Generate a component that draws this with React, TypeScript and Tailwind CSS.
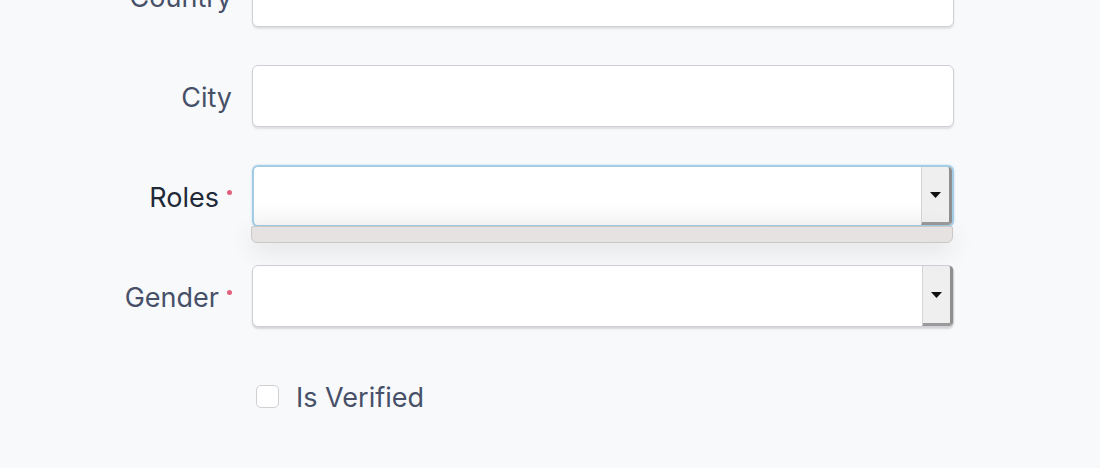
import React from "react";

const SelectArrow = () => (
    <div className="absolute right-0 top-0 bottom-0 w-[31px] flex items-center justify-center bg-[#efefef] border-l border-l-[#d4d4d4] border-r-[3px] border-r-[#8f8f8f] border-b-[3px] border-b-[#9a9a9a] rounded-r-[4px]">
        <svg width="11" height="6" viewBox="0 0 11 6">
            <path d="M0 0 L11 0 L5.5 6 Z" fill="#111" />
        </svg>
    </div>
);

const Label = ({ text, required, active }: { text: string; required?: boolean; active?: boolean }) => (
    <div className="flex justify-end items-center pr-5 pt-[3px]">
        <span className={`text-[27px] leading-none ${active ? "text-[#1f2937]" : "text-[#475068]"}`}>{text}</span>
        {required && <span className="ml-[8px] mb-[11px] w-[5px] h-[5px] rounded-full bg-[#e0607e]" />}
    </div>
);

const App = () => {
    return (
        <div
            className="w-[1100px] h-[468px] overflow-hidden bg-[#f8f9fb]"
            style={{ fontFamily: "Inter, 'Noto Sans', sans-serif" }}
        >
            <div className="-mt-[35px] grid grid-cols-[252px_702px] gap-y-[38px] items-center">
                <Label text="Country" />
                <div className="h-[62px] rounded-[6px] bg-white border border-[#cfd0d5] shadow-[0_2px_2px_rgba(0,0,0,0.1)]" />

                <Label text="City" />
                <div className="h-[62px] rounded-[6px] bg-white border border-[#cfd0d5] shadow-[0_2px_2px_rgba(0,0,0,0.1)]" />

                <Label text="Roles" required active />
                <div className="relative h-[62px]">
                    <div className="relative h-[62px] rounded-[6px] bg-gradient-to-b from-white from-60% to-[#f6f6f6] border-2 border-[#a3cde4] shadow-[0_0_2px_rgba(120,180,220,0.5)]">
                        <SelectArrow />
                    </div>
                    <div className="absolute left-[-1px] right-[1px] top-[61px] h-[17px] rounded-b-[6px] rounded-t-[2px] bg-[#e6e2e2] border border-[#cbc8c8] shadow-[0_8px_24px_rgba(0,0,0,0.10)] z-10" />
                </div>

                <Label text="Gender" required />
                <div className="relative h-[62px] rounded-[6px] bg-white border border-[#cfd0d5] shadow-[0_2px_2px_rgba(0,0,0,0.14)]">
                    <SelectArrow />
                </div>

                <div />
                <label className="flex items-center h-[62px] pl-[4px] gap-[17px]">
                    <span className="w-[23px] h-[23px] rounded-[5px] bg-white border border-[#cfd0d3]" />
                    <span className="text-[27px] leading-none pt-[3px] text-[#475068]">Is Verified</span>
                </label>
            </div>
        </div>
    );
};

export default App;
